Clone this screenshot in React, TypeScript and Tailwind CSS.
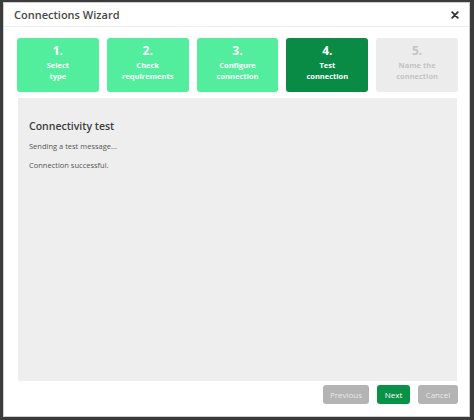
import React from 'react';

const steps = [
  { num: '1.', label: ['Select', 'type'], state: 'done' },
  { num: '2.', label: ['Check', 'requirements'], state: 'done' },
  { num: '3.', label: ['Configure', 'connection'], state: 'done' },
  { num: '4.', label: ['Test', 'connection'], state: 'active' },
  { num: '5.', label: ['Name the', 'connection'], state: 'todo' },
];

const stepClass: Record<string, string> = {
  done: 'bg-[#52ee9e] text-white',
  active: 'bg-[#0a8b45] text-white',
  todo: 'bg-[#ececec] text-[#c4c4c4]',
};

const App: React.FC = () => {
  return (
    <div
      className="w-[474px] h-[420px] bg-[#3b3b3b] pt-[2px] pl-[3px] pr-[4px] pb-[3px]"
      style={{ fontFamily: '"Open Sans", "Noto Sans", sans-serif' }}
    >
      <div className="h-full bg-white border border-[#cfcfcf] flex flex-col">
        {/* Header */}
        <div className="h-[24px] flex items-center justify-between pl-[10px] pr-[10px] border-b border-[#ececec]">
          <span className="text-[11px] font-semibold text-[#474747] leading-none">Connections Wizard</span>
          <svg width="8" height="8" viewBox="0 0 10 10" className="text-[#333]">
            <path d="M1.5 1.5 L8.5 8.5 M8.5 1.5 L1.5 8.5" stroke="currentColor" strokeWidth="2.2" strokeLinecap="round" />
          </svg>
        </div>

        {/* Steps */}
        <div className="flex gap-2 pl-[13px] pr-[11px] pt-[11px]">
          {steps.map((s) => (
            <div
              key={s.num}
              className={`flex-1 h-[54px] rounded-[3px] flex flex-col items-center pt-[5px] ${stepClass[s.state]}`}
            >
              <span className="text-[12px] font-bold leading-[16px]">{s.num}</span>
              <span className="text-[7.5px] font-bold leading-[11px] mt-[1px] text-center">{s.label[0]}</span>
              <span className="text-[7.5px] font-bold leading-[11px] text-center">{s.label[1]}</span>
            </div>
          ))}
        </div>

        {/* Content */}
        <div className="flex-1 ml-[14px] mr-[12px] mt-[6px] bg-[#eeeeee] px-[11px] pt-[20px]">
          <h2 className="text-[10.5px] font-semibold text-[#3d3d3d] leading-[16px]">Connectivity test</h2>
          <p className="text-[7.5px] text-[#555] mt-[6px] leading-[12px]">Sending a test message...</p>
          <p className="text-[7.5px] text-[#555] mt-[7px] leading-[12px]">Connection successful.</p>
        </div>

        {/* Footer */}
        <div className="h-[35px] flex justify-end items-start gap-[8px] pr-[11px] pt-[4px]">
          <button className="w-[46px] h-[19px] rounded-[3px] bg-[#b4b4b4] text-[#e9e9e9] text-[8px]">Previous</button>
          <button className="w-[33px] h-[19px] rounded-[3px] bg-[#0a9148] text-white text-[8px]">Next</button>
          <button className="w-[40px] h-[19px] rounded-[3px] bg-[#b4b4b4] text-[#e9e9e9] text-[8px]">Cancel</button>
        </div>
      </div>
    </div>
  );
};

export default App;
